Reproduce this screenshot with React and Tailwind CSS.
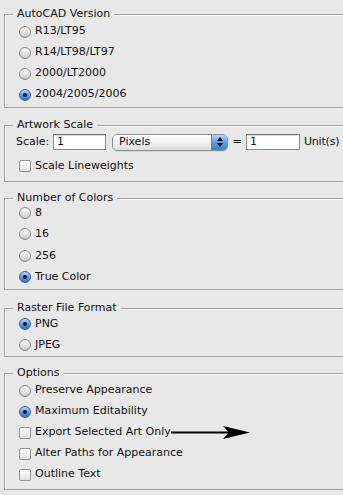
import React from 'react';

const Radio = ({ checked }) => (
  <span
    className={`relative flex items-center justify-center w-[12px] h-[12px] rounded-full border shrink-0 ${
      checked
        ? 'border-[#3f6298] bg-linear-to-b from-[#b9d6f6] via-[#5f9fe6] to-[#2a72d2]'
        : 'border-[#888888] bg-linear-to-b from-[#fafafa] via-[#e6e6e6] to-[#c9c9c9]'
    }`}
  >
    {checked && <span className="w-[4px] h-[4px] rounded-full bg-[#0d1520]" />}
  </span>
);

const Checkbox = () => (
  <span className="w-[12px] h-[12px] rounded-[2px] border border-[#929292] bg-linear-to-b from-[#ffffff] to-[#e2e2e2] shrink-0" />
);

const Section = ({ title, className, children }) => (
  <div className={`relative ml-[4px] w-[400px] border border-[#a2a2a2] shadow-[inset_1px_1px_0_#f7f7f7] ${className}`}>
    <span className="absolute left-[8px] -top-[8px] px-[4px] bg-[#e8e8e8] leading-[14px] text-[#111]">
      {title}
    </span>
    {children}
  </div>
);

const Row = ({ h = 'h-[21px]', children }) => (
  <div className={`flex items-center gap-[4px] pl-[14px] ${h}`}>{children}</div>
);

const RadioRow = ({ label, checked, h }) => (
  <Row h={h}>
    <Radio checked={checked} />
    <span>{label}</span>
  </Row>
);

const CheckRow = ({ label, h, children }) => (
  <Row h={h}>
    <Checkbox />
    <span>{label}</span>
    {children}
  </Row>
);

export default function App() {
  return (
    <div
      className="w-[343px] h-[495px] overflow-hidden bg-[#e8e8e8] pt-[14px] text-[11px] text-[#111]"
      style={{ fontFamily: '"DejaVu Sans", "Liberation Sans", sans-serif' }}
    >
      {/* AutoCAD Version */}
      <Section title="AutoCAD Version" className="h-[94px] pt-[6px]">
        <RadioRow label="R13/LT95" />
        <RadioRow label="R14/LT98/LT97" />
        <RadioRow label="2000/LT2000" />
        <RadioRow label="2004/2005/2006" checked />
      </Section>

      {/* Artwork Scale */}
      <Section title="Artwork Scale" className="mt-[17px] h-[57px] pt-[6px]">
        <div className="flex items-center h-[20px] pl-[11px]">
          <span className="w-[37px]">Scale:</span>
          <div className="w-[53px] h-[16px] bg-white border border-[#8a8a8a] border-t-[#6e6e6e] shadow-[inset_0_1px_1px_rgba(0,0,0,0.15)] pl-[3px] leading-[14px]">
            1
          </div>
          <div className="ml-[6px] w-[116px] h-[17px] flex rounded-[5px] border border-[#8f8f8f] overflow-hidden shadow-[0_1px_0_rgba(0,0,0,0.08)]">
            <div className="flex-1 flex items-center pl-[6px] bg-linear-to-b from-[#ffffff] via-[#f2f2f2] to-[#dcdcdc]">
              Pixels
            </div>
            <div className="w-[16px] flex flex-col items-center justify-center gap-[2px] bg-linear-to-b from-[#b7d3f5] via-[#5d9de6] to-[#3a7fd4] border-l border-[#5a7fb0]">
              <svg width="6" height="4" viewBox="0 0 6 4">
                <path d="M0 4 L3 0 L6 4 Z" fill="#111" />
              </svg>
              <svg width="6" height="4" viewBox="0 0 6 4">
                <path d="M0 0 L6 0 L3 4 Z" fill="#111" />
              </svg>
            </div>
          </div>
          <span className="w-[18px] text-center">=</span>
          <div className="w-[54px] h-[16px] bg-white border border-[#8a8a8a] border-t-[#6e6e6e] shadow-[inset_0_1px_1px_rgba(0,0,0,0.15)] pl-[3px] leading-[14px]">
            1
          </div>
          <span className="ml-[4px] tracking-[-0.2px]">Unit(s)</span>
        </div>
        <div className="mt-[4px]">
          <CheckRow label="Scale Lineweights" h="h-[20px]" />
        </div>
      </Section>

      {/* Number of Colors */}
      <Section title="Number of Colors" className="mt-[16px] h-[92px] pt-[3px]">
        <RadioRow label="8" h="h-[21.5px]" />
        <RadioRow label="16" h="h-[21.5px]" />
        <RadioRow label="256" h="h-[21.5px]" />
        <RadioRow label="True Color" checked h="h-[21.5px]" />
      </Section>

      {/* Raster File Format */}
      <Section title="Raster File Format" className="mt-[18px] h-[49px] pt-[4px]">
        <RadioRow label="PNG" checked h="h-[21.5px]" />
        <RadioRow label="JPEG" h="h-[21.5px]" />
      </Section>

      {/* Options */}
      <Section title="Options" className="mt-[16px] h-[117px] pt-[6px]">
        <RadioRow label="Preserve Appearance" />
        <RadioRow label="Maximum Editability" checked />
        <CheckRow label="Export Selected Art Only">
          {/* annotation arrow */}
          <svg className="-ml-[4px]" width="80" height="15" viewBox="0 0 80 15">
            <rect x="0" y="6.5" width="60" height="2" fill="#000" />
            <path d="M52 1 L79 7.5 L52 14 L58 7.5 Z" fill="#000" />
          </svg>
        </CheckRow>
        <CheckRow label="Alter Paths for Appearance" />
        <CheckRow label="Outline Text" />
      </Section>
    </div>
  );
}
